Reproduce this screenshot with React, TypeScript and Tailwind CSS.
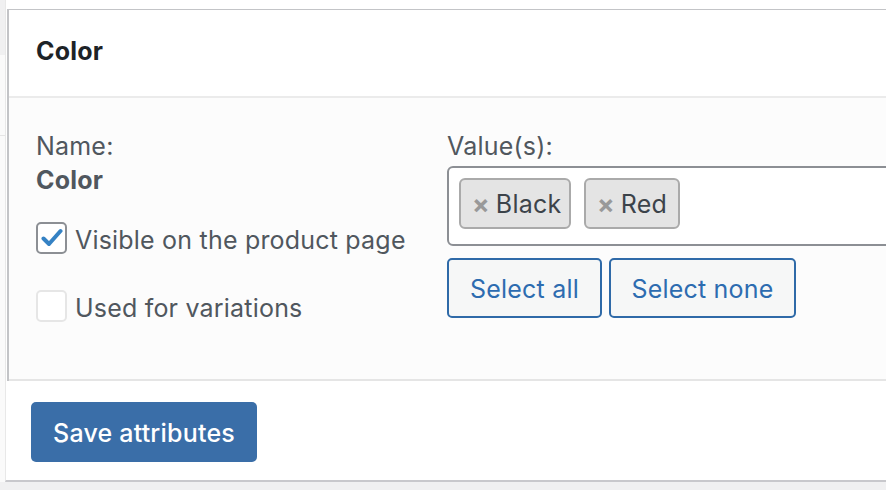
import React from "react";

export default function App() {
  return (
    <div
      className="w-[886px] h-[490px] bg-[#f0f0f1] overflow-hidden flex flex-col tracking-[0.2px]"
      style={{ fontFamily: "Inter, 'Noto Sans', sans-serif" }}
    >
      <div className="flex h-[482px] shrink-0">
        <div className="w-[5px] flex flex-col shrink-0">
          <div className="h-[55px] bg-[#f0f0f1]" />
          <div className="h-[81px] bg-[#fafafa] border-b border-[#e5e5e5]" />
          <div className="flex-1 bg-[#fafafa]" />
        </div>
        <div className="flex-1 bg-white border-l border-[#e8e8e8] border-b-2 border-b-[#c8c8cc] flex flex-col min-w-0">
          <div className="mt-[9px] ml-[1px] mr-[-20px] border-l-2 border-t border-[#c3c4c7] flex flex-col">
            <div className="h-[86px] flex items-center pl-[27px] pb-[3px] text-[25px] font-bold text-[#1d2327]">
              Color
            </div>
            <div className="h-[285px] bg-[#fcfcfc] border-t-2 border-[#ebebeb] border-b-2 border-b-[#e5e5e5] flex pt-[31px] pl-[27px]">
              <div className="w-[411px] shrink-0 flex flex-col text-[25px] text-[#50575e]">
                <div className="leading-[34px]">Name:</div>
                <div className="leading-[34px] font-bold">Color</div>
                <div className="flex items-center mt-[25px] h-[32px]">
                  <div className="w-[31px] h-[32px] shrink-0 rounded-[5px] border-2 border-[#8c8f94] bg-white flex items-center justify-center">
                    <svg width="22" height="20" viewBox="0 0 22 20">
                      <path
                        d="M2.5 10.5 L8 16 L19.5 3"
                        fill="none"
                        stroke="#3582c4"
                        strokeWidth="4"
                        strokeLinecap="round"
                        strokeLinejoin="round"
                      />
                    </svg>
                  </div>
                  <span className="ml-[8px] pt-[3px] leading-[34px] whitespace-nowrap">Visible on the product page</span>
                </div>
                <div className="flex items-center mt-[36px] h-[32px]">
                  <div className="w-[31px] h-[32px] shrink-0 rounded-[5px] border-2 border-[#e6e6e6] bg-white" />
                  <span className="ml-[8px] pt-[3px] leading-[34px] whitespace-nowrap">Used for variations</span>
                </div>
              </div>
              <div className="flex-1 flex flex-col text-[25px]">
                <div className="leading-[34px] text-[#50575e]">Value(s):</div>
                <div className="mt-[3px] h-[80px] w-[480px] rounded-[6px] border-2 border-[#8c8f94] bg-white flex items-start pt-[10px] pl-[10px] gap-[13px]">
                  <div className="h-[51px] w-[112px] rounded-[6px] border-2 border-[#aaaaaa] bg-[#e4e4e4] flex items-center pl-[11px] pt-[2px] text-[#3c434a]">
                    <span className="text-[#999] font-bold text-[26px] leading-none mr-[6px]">×</span>
                    <span>Black</span>
                  </div>
                  <div className="h-[51px] w-[96px] rounded-[6px] border-2 border-[#aaaaaa] bg-[#e4e4e4] flex items-center pl-[11px] pt-[2px] text-[#3c434a]">
                    <span className="text-[#999] font-bold text-[26px] leading-none mr-[6px]">×</span>
                    <span>Red</span>
                  </div>
                </div>
                <div className="mt-[12px] flex gap-[7px]">
                  <button className="h-[60px] w-[155px] rounded-[5px] border-2 border-[#2f6aa8] bg-[#f6f7f7] text-[#2d6cb0] text-[25px] pt-[3px]">
                    Select all
                  </button>
                  <button className="h-[60px] w-[187px] rounded-[5px] border-2 border-[#2f6aa8] bg-[#f6f7f7] text-[#2d6cb0] text-[25px] pt-[3px]">
                    Select none
                  </button>
                </div>
              </div>
            </div>
          </div>
          <div className="pl-[25px] pt-[21px]">
            <button className="h-[60px] w-[226px] rounded-[5px] bg-[#3a6ea8] text-white text-[25px] font-medium pt-[3px]">
              Save attributes
            </button>
          </div>
        </div>
      </div>
    </div>
  );
}
